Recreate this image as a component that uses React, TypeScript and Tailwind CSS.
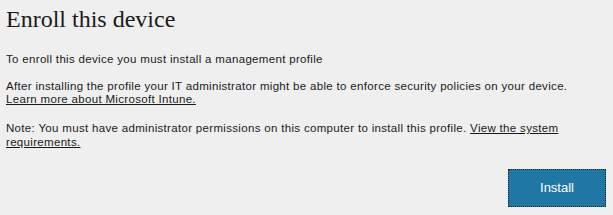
export default function App() {
  return (
    <div className="flex h-[215px] w-[613px] flex-col bg-[#efefef] px-[6px] text-[#1a1a1a]">
      <h1 className="mt-[5px] text-[24px] leading-[28px] font-normal" style={{ fontFamily: '"Liberation Serif", serif' }}>
        Enroll this device
      </h1>
      <div className="text-[11.5px] leading-[13px] tracking-[0.32px]" style={{ fontFamily: '"Liberation Sans", Arial, sans-serif' }}>
        <p className="mt-[20px]">To enroll this device you must install a management profile</p>
        <p className="mt-[14px]">
          After installing the profile your IT administrator might be able to enforce security policies on your device.
          <br />
          <a className="underline">Learn more about Microsoft Intune.</a>
        </p>
        <p className="mt-[15px] leading-[14px]">
          Note: You must have administrator permissions on this computer to install this profile.{" "}
          <a className="underline">
            View the system
            <br />
            requirements.
          </a>
        </p>
      </div>
      <div className="mt-auto mb-[8px] flex justify-end pr-[1px]">
        <button
          className="h-[38px] w-[98px] border border-dotted border-[#222] bg-[#1f77a6] text-[13px] text-white"
          style={{ fontFamily: '"Liberation Sans", Arial, sans-serif' }}
        >
          Install
        </button>
      </div>
    </div>
  );
}
